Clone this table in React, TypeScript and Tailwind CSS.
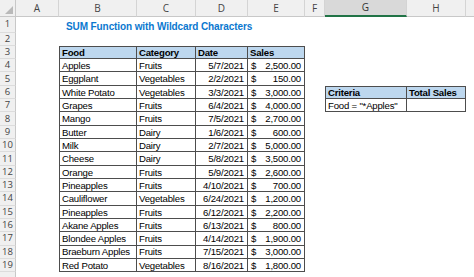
import clsx from "clsx";

const COLS = ["A", "B", "C", "D", "E", "F", "G", "H", ""];

const ROWS: [string, string, string, string][] = [
  ["Apples", "Fruits", "5/7/2021", "2,500.00"],
  ["Eggplant", "Vegetables", "2/2/2021", "150.00"],
  ["White Potato", "Vegetables", "3/3/2021", "3,000.00"],
  ["Grapes", "Fruits", "6/4/2021", "4,000.00"],
  ["Mango", "Fruits", "7/5/2021", "2,700.00"],
  ["Butter", "Dairy", "1/6/2021", "600.00"],
  ["Milk", "Dairy", "2/7/2021", "5,000.00"],
  ["Cheese", "Dairy", "5/8/2021", "3,500.00"],
  ["Orange", "Fruits", "5/9/2021", "2,600.00"],
  ["Pineapples", "Fruits", "4/10/2021", "700.00"],
  ["Cauliflower", "Vegetables", "6/24/2021", "1,200.00"],
  ["Pineapples", "Fruits", "6/12/2021", "2,200.00"],
  ["Akane Apples", "Fruits", "6/13/2021", "800.00"],
  ["Blondee Apples", "Fruits", "4/14/2021", "1,900.00"],
  ["Braeburn Apples", "Fruits", "7/15/2021", "3,000.00"],
  ["Red Potato", "Vegetables", "8/16/2021", "1,800.00"],
];

const HEAD = ["Food", "Category", "Date", "Sales"];

function renderCell(r: number, c: number) {
  // c: 0 = A ... 8 = I
  const inTable = r >= 3 && r <= 19 && c >= 1 && c <= 4;
  const inCriteria = (r === 6 || r === 7) && (c === 6 || c === 7);
  const isHead = (inTable && r === 3) || (inCriteria && r === 6);

  let content: React.ReactNode = null;
  if (r === 1 && c === 1) {
    content = (
      <span className="pl-[7px] whitespace-nowrap font-bold text-[10px] tracking-[-0.1px] text-[#0b78cf]">
        SUM Function with Wildcard Characters
      </span>
    );
  } else if (inTable && r === 3) {
    content = <span className="pl-[2px]">{HEAD[c - 1]}</span>;
  } else if (inTable) {
    const row = ROWS[r - 4];
    if (c === 3) {
      content = <span className="w-full text-right pr-[3px]">{row[2]}</span>;
    } else if (c === 4) {
      content = (
        <span className="w-full flex justify-between px-[3px]">
          <span>$</span>
          <span>{row[3]}</span>
        </span>
      );
    } else {
      content = <span className="pl-[2px] whitespace-nowrap">{row[c - 1]}</span>;
    }
  } else if (inCriteria) {
    if (r === 6) content = <span className="pl-[2px]">{c === 6 ? "Criteria" : "Total Sales"}</span>;
    else if (c === 6) content = <span className="pl-[2px] whitespace-nowrap">Food = "*Apples"</span>;
  }

  return (
    <div
      key={`${r}-${c}`}
      className={clsx(
        "flex items-end pb-[1px] leading-none min-w-0",
        (inTable || inCriteria) && "border-r border-b border-[#4d4d4d]",
        ((inTable && r === 3) || (inCriteria && r === 6)) && "border-t",
        ((inTable && c === 1) || (inCriteria && c === 6)) && "border-l",
        isHead && "bg-[#bdd7ee] font-bold"
      )}
    >
      {content}
    </div>
  );
}

export default function App() {
  const rowNums = Array.from({ length: 20 }, (_, i) => i + 1);
  return (
    <div className="w-[474px] h-[277px] overflow-hidden bg-white text-black text-[9.6px] tracking-[-0.2px] font-['Liberation_Sans',Arial,sans-serif]">
      <div className="grid grid-cols-[16px_43px_78px_59px_52px_57px_20px_82px_59px_40px] grid-rows-[17px_15.5px_repeat(19,13.33px)]">
        <div className="relative bg-[#f0f0f0] border-r border-b border-[#c8c8c8]">
          <svg className="absolute right-[2px] bottom-[2px]" width="8" height="8" viewBox="0 0 8 8">
            <polygon points="8,0 8,8 0,8" fill="#b9b9b9" />
          </svg>
        </div>
        {COLS.map((col, i) => (
          <div
            key={i}
            className={clsx(
              "flex items-center justify-center text-[10px] tracking-normal font-['Open_Sans',sans-serif] border-r border-[#d4d4d4]",
              col === "G"
                ? "bg-[#d9d9d9] text-[#333] border-b-2 border-b-[#217346]"
                : "bg-[#f0f0f0] text-[#444] border-b border-b-[#c8c8c8]"
            )}
          >
            {col}
          </div>
        ))}
        {rowNums.map((r) => (
          <div key={r} className="contents">
            <div className="flex items-center justify-center bg-[#f0f0f0] text-[#444] text-[9.5px] tracking-normal font-['Open_Sans',sans-serif] border-r border-[#c8c8c8] border-b border-b-[#dcdcdc]">
              {r < 20 ? r : ""}
            </div>
            {COLS.map((_, c) => renderCell(r, c))}
          </div>
        ))}
      </div>
    </div>
  );
}
